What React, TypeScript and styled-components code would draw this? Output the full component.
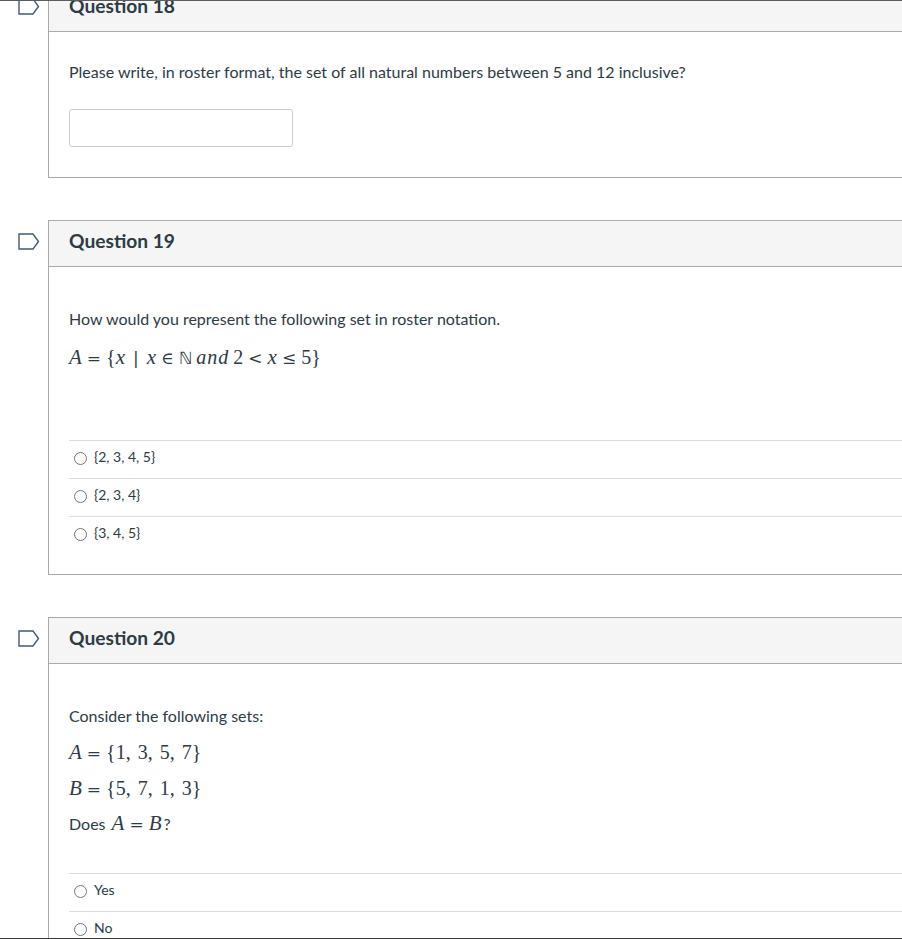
import React from "react";
import styled, { createGlobalStyle } from "styled-components";

const GlobalStyle = createGlobalStyle`
  html, body {
    margin: 0;
    padding: 0;
    background: #fff;
    overflow: hidden;
  }
  body {
    font-family: Lato, "Noto Sans", sans-serif;
    color: #2d3b45;
  }
`;

function Flag() {
  return (
    <FlagIcon width="22" height="17" viewBox="0 0 22 17">
      <path d="M1 1 H15 L20.5 8.5 L15 16 H1 Z" fill="none" stroke="#3f5b72" strokeWidth="1.4" />
    </FlagIcon>
  );
}

type AnswerProps = { name: string; label: string };

function Answer({ name, label }: AnswerProps) {
  return (
    <AnswerRow>
      <Radio type="radio" name={name} />
      <AnswerLabel>{label}</AnswerLabel>
    </AnswerRow>
  );
}

function App() {
  return (
    <>
      <GlobalStyle />
      <Frame>
        <QuestionList>
          <QuestionRow>
            <Flag />
            <Card>
              <CardHeader>Question 18</CardHeader>
              <CardBody $top={28} $bottom={30}>
                <Text>Please write, in roster format, the set of all natural numbers between 5 and 12 inclusive?</Text>
                <AnswerInput type="text" />
              </CardBody>
            </Card>
          </QuestionRow>

          <QuestionRow>
            <Flag />
            <Card>
              <CardHeader>Question 19</CardHeader>
              <CardBody $top={40} $bottom={20}>
                <Text>How would you represent the following set in roster notation.</Text>
                <MathLine $top={14}>
                  <Var>A</Var><Rel>=</Rel>{"{"}<Var>x</Var><Rel $gap={8}>|</Rel><Var>x</Var>
                  <Rel>∈</Rel><Blackboard>ℕ</Blackboard><Word>and</Word>2<Rel>&lt;</Rel><Var>x</Var><Rel>≤</Rel>5{"}"}
                </MathLine>
                <Answers $top={71}>
                  <Answer name="q19" label="{2, 3, 4, 5}" />
                  <Answer name="q19" label="{2, 3, 4}" />
                  <Answer name="q19" label="{3, 4, 5}" />
                </Answers>
              </CardBody>
            </Card>
          </QuestionRow>

          <QuestionRow>
            <Flag />
            <Card>
              <CardHeader>Question 20</CardHeader>
              <CardBody $top={40} $bottom={38}>
                <Text>Consider the following sets:</Text>
                <MathLine>
                  <Var>A</Var><Rel>=</Rel>{"{1, 3, 5, 7}"}
                </MathLine>
                <MathLine>
                  <Var>B</Var><Rel>=</Rel>{"{5, 7, 1, 3}"}
                </MathLine>
                <Text>
                  Does <InlineMath><Var>A</Var><Rel>=</Rel><Var>B</Var></InlineMath>?
                </Text>
                <Answers $top={37}>
                  <Answer name="q20" label="Yes" />
                  <Answer name="q20" label="No" />
                </Answers>
              </CardBody>
            </Card>
          </QuestionRow>
        </QuestionList>
      </Frame>
    </>
  );
}

const Frame = styled.div`
  box-sizing: border-box;
  height: 939px;
  overflow: hidden;
  border-top: 1px solid #5c5c5c;
  border-bottom: 1px solid #3a3a3a;
`;

const QuestionList = styled.div`
  display: flex;
  flex-direction: column;
  gap: 42px;
  margin-top: -16px;
`;

const QuestionRow = styled.div`
  display: flex;
  align-items: flex-start;
`;

const FlagIcon = styled.svg`
  flex: none;
  margin: 13px 8px 0 18px;
  display: block;
`;

const Card = styled.section`
  flex: 1;
  min-width: 0;
  border: 1px solid #a9a9a9;
  border-right: none;
`;

const CardHeader = styled.h2`
  box-sizing: border-box;
  height: 46px;
  margin: 0;
  padding: 0 20px 6px;
  display: flex;
  align-items: center;
  background: #f5f5f5;
  border-bottom: 1px solid #a9a9a9;
  font-size: 19.2px;
  font-weight: 700;
  color: #2d3b45;
`;

const CardBody = styled.div<{ $top: number; $bottom: number }>`
  padding: ${(p) => p.$top}px 0 ${(p) => p.$bottom}px 20px;
`;

const Text = styled.p`
  margin: 0 0 12px;
  font-size: 16px;
  line-height: 24px;
  color: #2d3b45;
`;

const MathLine = styled.p<{ $top?: number }>`
  margin: ${(p) => p.$top ?? 0}px 0 12px;
  height: 24px;
  line-height: 24px;
  font-family: "Liberation Serif", serif;
  font-size: 20px;
  word-spacing: 2px;
  color: #2d3b45;
  white-space: nowrap;
`;

const InlineMath = styled.span`
  margin: 0 2px;
  font-family: "Liberation Serif", serif;
  font-size: 20px;
  line-height: 20px;
`;

const Var = styled.i`
  font-size: 21px;
`;

const Word = styled.i`
  margin: 0 4px;
  letter-spacing: 1px;
`;

const Rel = styled.span<{ $gap?: number }>`
  margin: 0 ${(p) => p.$gap ?? 5}px;
  font-family: "DejaVu Serif", serif;
  font-size: 17px;
`;

const Blackboard = styled.span`
  font-family: "DejaVu Sans", sans-serif;
  font-size: 17px;
`;

const AnswerInput = styled.input`
  display: block;
  box-sizing: border-box;
  width: 224px;
  height: 38px;
  margin-top: 25px;
  border: 1px solid #c7cdd1;
  border-radius: 3px;
  background: #fff;
`;

const Answers = styled.div<{ $top: number }>`
  margin-top: ${(p) => p.$top}px;
`;

const AnswerRow = styled.label`
  box-sizing: border-box;
  height: 38px;
  padding-bottom: 4px;
  display: flex;
  align-items: center;
  border-top: 1px solid #dcdcdc;
  font-size: 14px;
  color: #2d3b45;
`;

const Radio = styled.input`
  width: 13px;
  height: 13px;
  margin: 2px 7px 0 5px;
`;

const AnswerLabel = styled.span`
  margin-bottom: 2px;
`;

export default App;
